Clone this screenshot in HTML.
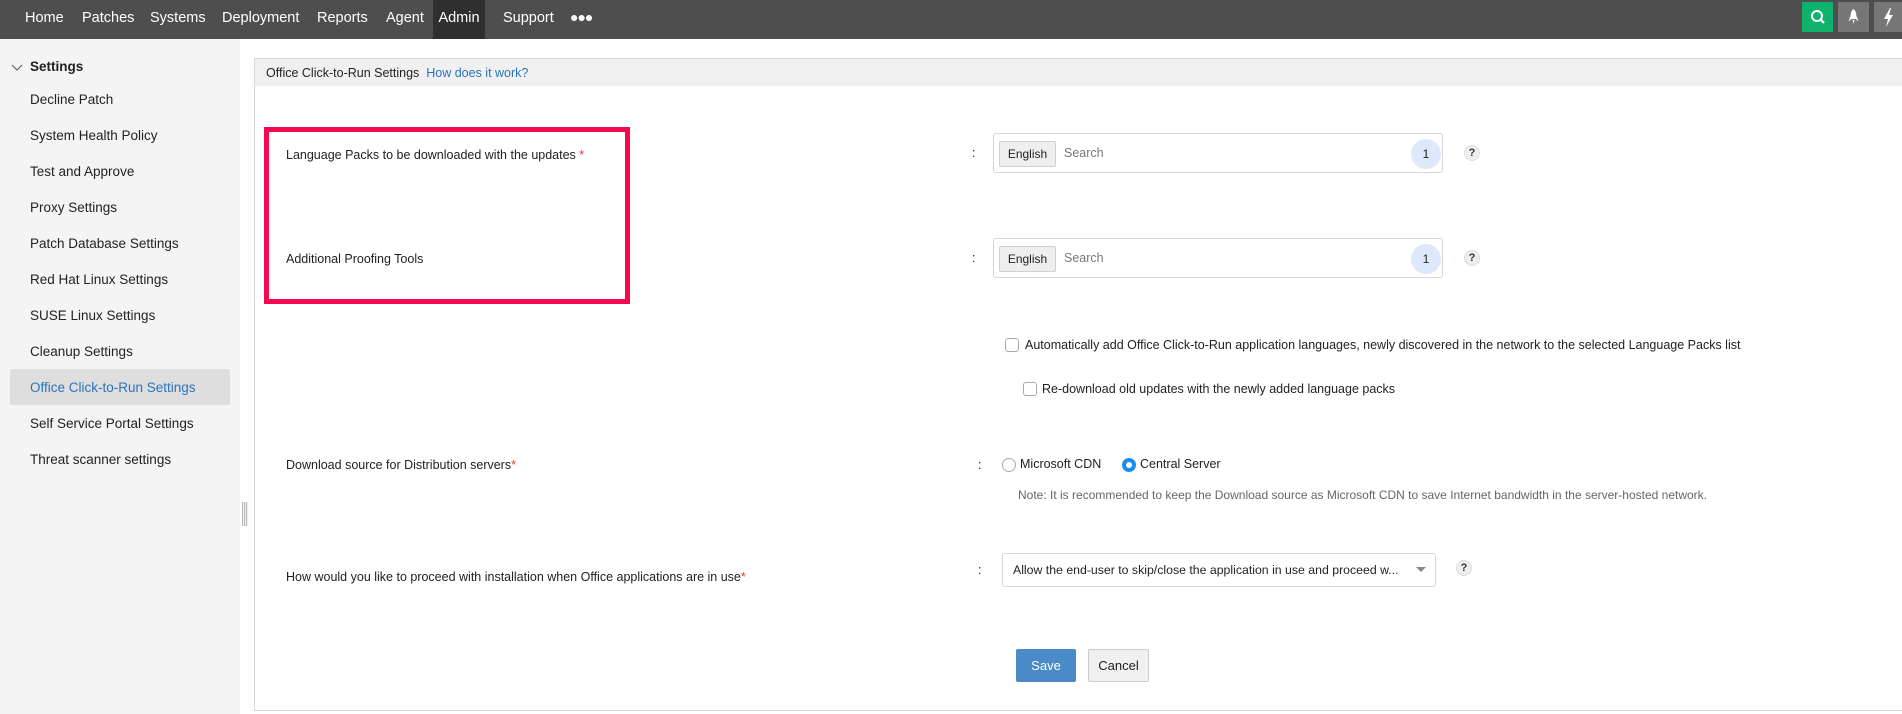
<!DOCTYPE html>
<html><head><meta charset="utf-8"><style>
*{box-sizing:border-box;margin:0;padding:0}
body{width:1902px;height:714px;overflow:hidden;background:#fff;font-family:"Liberation Sans",sans-serif;color:#222;position:relative}
.abs{position:absolute;white-space:nowrap}
#nav{position:absolute;left:0;top:0;width:1902px;height:39px;background:#4e4e4e}
#nav .it{position:absolute;top:0;height:39px;line-height:36px;color:#fff;font-size:14.5px}
#side{position:absolute;left:0;top:39px;width:240px;height:675px;background:#f4f4f4}
.si{position:absolute;left:30px;font-size:13.5px;color:#222}
.c{font-size:12.5px}
.inp{position:absolute;left:993px;width:450px;height:40px;border:1px solid #d6d6d6;border-radius:3px;background:#fff}
.tag{position:absolute;left:5px;top:7px;width:57px;height:26px;background:#eee;border:1px solid #d0d0d0;border-radius:2px;font-size:12px;line-height:24px;text-align:center}
.ph{position:absolute;left:70px;top:12px;font-size:12.5px;color:#777}
.badge{position:absolute;left:417px;top:5px;width:30px;height:30px;border-radius:50%;background:#dde9fb;font-size:12px;line-height:30px;text-align:center}
.help{position:absolute;width:16px;height:16px;border-radius:50%;background:#eee;border:1px solid #ddd;font-size:11px;font-weight:bold;line-height:14px;text-align:center;color:#333}
.cb{position:absolute;width:14px;height:14px;border:1px solid #aaa;border-radius:3px;background:#fff}
.req{color:#e33}
</style></head><body>
<div id="nav">
<div class="it" style="left:25px">Home</div>
<div class="it" style="left:82px">Patches</div>
<div class="it" style="left:150px">Systems</div>
<div class="it" style="left:222px">Deployment</div>
<div class="it" style="left:317px">Reports</div>
<div class="it" style="left:386px">Agent</div>
<div class="it" style="left:433px;width:52px;background:#2f2f2f;text-align:center">Admin</div>
<div class="it" style="left:503px">Support</div>
<div class="it" style="left:570px;font-size:14px;letter-spacing:-1px;top:-1px">●●●</div>
<div style="position:absolute;left:1802px;top:2px;width:31px;height:30px;background:#0fb26c">
<svg width="31" height="30"><circle cx="15" cy="14" r="5" stroke="#fff" stroke-width="2" fill="none"/><line x1="18.5" y1="17.5" x2="22" y2="21" stroke="#fff" stroke-width="2.2"/></svg></div>
<div style="position:absolute;left:1838px;top:2px;width:31px;height:30px;background:#777">
<svg width="31" height="30"><path d="M15.5 7 C18 9 18.5 12 18.5 17 L12.5 17 C12.5 12 13 9 15.5 7Z M12.5 14 L10.5 19 L12.5 18Z M18.5 14 L20.5 19 L18.5 18Z M14.5 18 L16.5 18 L15.5 22Z" fill="#fff"/></svg></div>
<div style="position:absolute;left:1874px;top:2px;width:28px;height:30px;background:#777">
<svg width="28" height="30"><path d="M16 6 L10 17 L14 17 L12 25 L19 13 L15 13 L17 6Z" fill="#fff"/></svg></div>
</div>
<div id="side">
<svg class="abs" style="left:11px;top:25px" width="12" height="8"><path d="M1 1 L6 6 L11 1" stroke="#666" fill="none" stroke-width="1.2"/></svg>
<div class="si" style="top:20px;font-weight:bold">Settings</div>
<div class="si" style="top:53px">Decline Patch</div>
<div class="si" style="top:89px">System Health Policy</div>
<div class="si" style="top:125px">Test and Approve</div>
<div class="si" style="top:161px">Proxy Settings</div>
<div class="si" style="top:197px">Patch Database Settings</div>
<div class="si" style="top:233px">Red Hat Linux Settings</div>
<div class="si" style="top:269px">SUSE Linux Settings</div>
<div class="si" style="top:305px">Cleanup Settings</div>
<div style="position:absolute;left:10px;top:330px;width:220px;height:36px;background:#dedede;border-radius:2px"></div>
<div class="si" style="top:341px;color:#2a75bb">Office Click-to-Run Settings</div>
<div class="si" style="top:377px">Self Service Portal Settings</div>
<div class="si" style="top:413px">Threat scanner settings</div>
</div>
<div style="position:absolute;left:242px;top:502px;width:6px;height:24px;background:repeating-linear-gradient(90deg,#bbb 0 1px,#eee 1px 2px)"></div>
<div style="position:absolute;left:254px;top:58px;width:1660px;height:653px;border:1px solid #d8d8d8;border-right:none"></div>
<div style="position:absolute;left:255px;top:59px;width:1647px;height:27px;background:#f0f0f0"></div>
<div class="abs c" style="left:266px;top:66px">Office Click-to-Run Settings&nbsp; <span style="color:#2a75bb">How does it work?</span></div>
<div style="position:absolute;left:264px;top:127px;width:366px;height:177px;border:5px solid #f5084f"></div>
<div class="abs c" style="left:286px;top:148px">Language Packs to be downloaded with the updates <span class="req">*</span></div>
<div class="abs c" style="left:286px;top:252px">Additional Proofing Tools</div>
<div class="abs c" style="left:972px;top:146px">:</div>
<div class="abs c" style="left:972px;top:251px">:</div>
<div class="inp" style="top:133px"><div class="tag">English</div><div class="ph">Search</div><div class="badge">1</div></div>
<div class="inp" style="top:238px"><div class="tag">English</div><div class="ph">Search</div><div class="badge">1</div></div>
<div class="help" style="left:1464px;top:145px">?</div>
<div class="help" style="left:1464px;top:250px">?</div>
<div class="cb" style="left:1005px;top:338px"></div>
<div class="abs c" style="left:1025px;top:338px">Automatically add Office Click-to-Run application languages, newly discovered in the network to the selected Language Packs list</div>
<div class="cb" style="left:1023px;top:382px"></div>
<div class="abs c" style="left:1042px;top:382px">Re-download old updates with the newly added language packs</div>
<div class="abs c" style="left:286px;top:458px">Download source for Distribution servers<span class="req">*</span></div>
<div class="abs c" style="left:978px;top:458px">:</div>
<div style="position:absolute;left:1002px;top:458px;width:14px;height:14px;border-radius:50%;border:1px solid #aaa"></div>
<div class="abs c" style="left:1020px;top:457px">Microsoft CDN</div>
<div style="position:absolute;left:1122px;top:458px;width:14px;height:14px;border-radius:50%;background:#1a8cf0"><div style="position:absolute;left:4px;top:4px;width:6px;height:6px;border-radius:50%;background:#fff"></div></div>
<div class="abs c" style="left:1140px;top:457px">Central Server</div>
<div class="abs" style="left:1018px;top:488px;font-size:12px;color:#666">Note: It is recommended to keep the Download source as Microsoft CDN to save Internet bandwidth in the server-hosted network.</div>
<div class="abs c" style="left:286px;top:570px">How would you like to proceed with installation when Office applications are in use<span class="req">*</span></div>
<div class="abs c" style="left:978px;top:563px">:</div>
<div style="position:absolute;left:1002px;top:553px;width:434px;height:34px;border:1px solid #d6d6d6;border-radius:3px"></div>
<div class="abs" style="left:1013px;top:563px;font-size:12.3px">Allow the end-user to skip/close the application in use and proceed w...</div>
<svg class="abs" style="left:1416px;top:567px" width="10" height="6"><path d="M0 0 L10 0 L5 5Z" fill="#888"/></svg>
<div class="help" style="left:1456px;top:560px">?</div>
<div style="position:absolute;left:1016px;top:649px;width:60px;height:33px;background:#4a8ac9;border-radius:2px;color:#fff;font-size:13px;line-height:33px;text-align:center">Save</div>
<div style="position:absolute;left:1088px;top:649px;width:61px;height:33px;background:#f0f0f0;border:1px solid #ccc;border-radius:2px;font-size:13px;line-height:31px;text-align:center">Cancel</div>
</body></html>
